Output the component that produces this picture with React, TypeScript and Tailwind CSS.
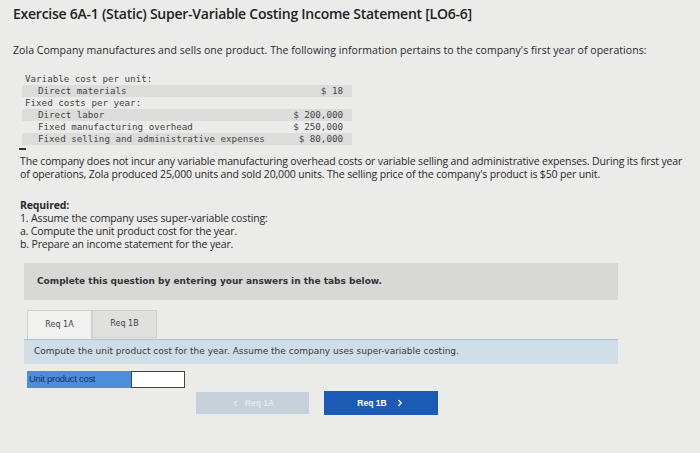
import React from 'react';
import { ChevronLeft, ChevronRight } from 'lucide-react';

const rows = [
  { label: 'Variable cost per unit:', value: '', indent: false, shade: false },
  { label: 'Direct materials', value: '$ 18', indent: true, shade: true },
  { label: 'Fixed costs per year:', value: '', indent: false, shade: false },
  { label: 'Direct labor', value: '$ 200,000', indent: true, shade: true },
  { label: 'Fixed manufacturing overhead', value: '$ 250,000', indent: true, shade: false },
  { label: 'Fixed selling and administrative expenses', value: '$ 80,000', indent: true, shade: true },
];

export default function App() {
  return (
    <div className="w-[700px] h-[453px] bg-[#ebebea] text-[#2a2a2a] font-['Open_Sans',sans-serif] overflow-hidden">
      <div className="pl-[13px] pt-[5px]">
        <h1 className="text-[14px] leading-[18px] font-semibold tracking-[-0.25px] text-[#222]">
          Exercise 6A-1 (Static) Super-Variable Costing Income Statement [LO6-6]
        </h1>
        <p className="mt-[20px] text-[10.5px] leading-[14px] tracking-[0.05px]">
          Zola Company manufactures and sells one product. The following information pertains to the company's first year of operations:
        </p>
      </div>

      <div className="mt-[16px] ml-[22px] w-[330px] font-['DejaVu_Sans_Mono',monospace] text-[9.2px] text-[#444]">
        {rows.map((r, i) => (
          <div key={i} className={`flex h-[12px] items-center ${r.shade ? 'bg-[#dcdcdb]' : ''}`}>
            <span className={r.indent ? 'pl-[16px]' : 'pl-[3px]'}>{r.label}</span>
            <span className="ml-auto pr-[9px]">{r.value}</span>
          </div>
        ))}
      </div>
      <div className="ml-[19px] mt-[3px] w-[7px] h-[2px] bg-[#333]" />

      <div className="pl-[20px] pt-[5px] text-[10.5px] leading-[13px] tracking-[-0.15px] pr-[12px]">
        <p>
          The company does not incur any variable manufacturing overhead costs or variable selling and administrative expenses. During its first year of operations, Zola produced 25,000 units and sold 20,000 units. The selling price of the company's product is $50 per unit.
        </p>
        <p className="mt-[18px] font-bold">Required:</p>
        <p>1. Assume the company uses super-variable costing:</p>
        <p>a. Compute the unit product cost for the year.</p>
        <p>b. Prepare an income statement for the year.</p>
      </div>

      <div className="ml-[24px] w-[594px] mt-[12px] h-[37px] bg-[#d8d8d7] flex items-center pl-[13px] font-['DejaVu_Sans',sans-serif] text-[9px] font-bold text-[#333]">
        Complete this question by entering your answers in the tabs below.
      </div>

      <div className="ml-[27px] mt-[10px] flex items-start font-['DejaVu_Sans',sans-serif] text-[8px] text-[#444]">
        <div className="w-[65px] h-[29px] bg-[#f1f1f0] border border-[#cfcfcf] border-b-0 flex items-center justify-center">Req 1A</div>
        <div className="w-[65px] h-[28px] bg-[#e0e0df] border border-[#cfcfcf] flex items-center justify-center">Req 1B</div>
      </div>
      <div className="ml-[24px] w-[594px] h-[25px] bg-[#cfdde7] border-t border-[#a9c1d3] flex items-center pl-[10px] font-['DejaVu_Sans',sans-serif] text-[9px] text-[#3a3a3a]">
        Compute the unit product cost for the year. Assume the company uses super-variable costing.
      </div>

      <div className="ml-[27px] mt-[7px] flex h-[17px]">
        <div className="w-[104px] bg-[#4b8fdc] flex items-center pl-[2px] font-['Liberation_Sans',sans-serif] text-[9.5px] text-[#1c2f63] tracking-[-0.3px]">
          Unit product cost
        </div>
        <div className="w-[54px] bg-white border border-[#444]" />
      </div>

      <div className="mt-[4px] flex ml-[196px] gap-[15px] font-['Liberation_Sans',sans-serif] text-[8.5px] font-bold">
        <div className="w-[113px] h-[22px] bg-[#c6d0db] text-[#e4e9ef] flex items-center justify-center gap-[5px]">
          <ChevronLeft size={9} strokeWidth={3} />
          <span>Req 1A</span>
        </div>
        <div className="w-[114px] h-[24px] -mt-[1px] bg-[#1b5bb5] text-white flex items-center justify-center gap-[8px]">
          <span>Req 1B</span>
          <ChevronRight size={10} strokeWidth={3} />
        </div>
      </div>
    </div>
  );
}
